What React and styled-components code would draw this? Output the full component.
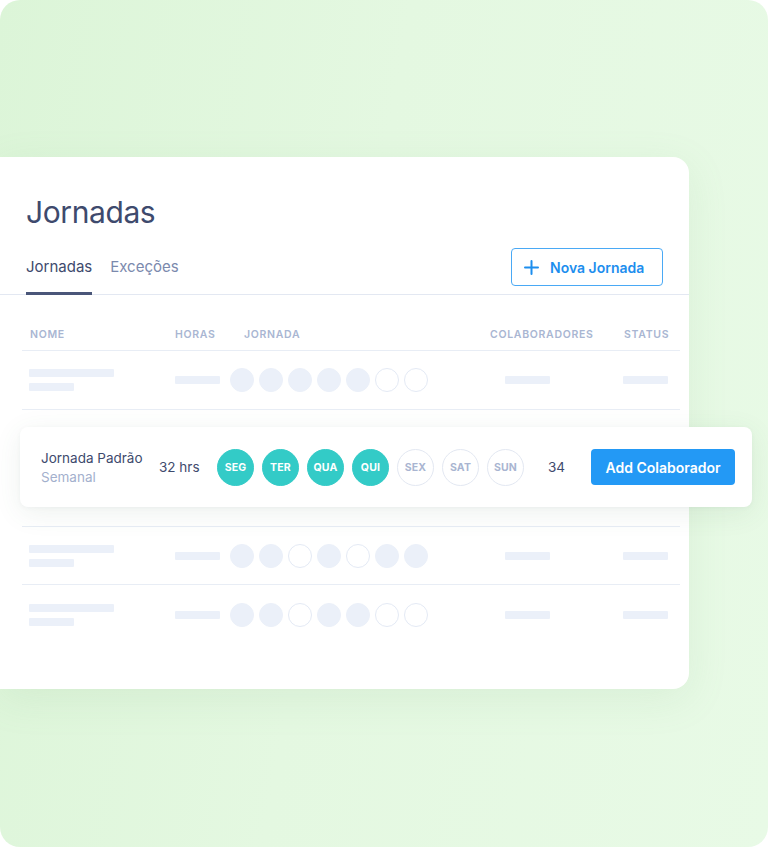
import React from 'react';
import styled, { createGlobalStyle } from 'styled-components';

const GlobalStyle = createGlobalStyle`
	* { box-sizing: border-box; }
	body {
		margin: 0;
		background: #ffffff;
		font-family: "Inter", "Lato", sans-serif;
		-webkit-font-smoothing: antialiased;
	}
`;

const Frame = styled.div`
	width: 768px;
	height: 847px;
	border-radius: 20px;
	overflow: hidden;
	padding-top: 157px;
	background: linear-gradient(100deg, #dcf5d8 0%, #e4f8e1 45%, #e8fae6 100%);
`;

const Card = styled.div`
	width: 689px;
	height: 532px;
	background: #ffffff;
	border-radius: 0 16px 16px 0;
	box-shadow: 0 10px 40px rgba(120, 170, 120, 0.12);
`;

const Head = styled.div`
	padding: 35px 26px 0 26px;
`;

const Title = styled.h1`
	margin: 0;
	font-size: 30px;
	line-height: 40px;
	font-weight: 400;
	letter-spacing: -0.4px;
	color: #3e4a6d;
`;

const TabBar = styled.div`
	margin-top: 16px;
	display: flex;
	justify-content: space-between;
	align-items: flex-start;
	padding: 0 26px;
	border-bottom: 1px solid #e3e8f2;
`;

const Tabs = styled.div`
	display: flex;
	gap: 18px;
`;

const Tab = styled.div`
	padding: 9px 0 15px;
	font-size: 15px;
	line-height: 20px;
	color: ${p => (p.$active ? '#3e4a6d' : '#7b89ad')};
	border-bottom: 3px solid ${p => (p.$active ? '#4a5679' : 'transparent')};
	margin-bottom: -1px;
`;

const OutlineButton = styled.button`
	display: flex;
	align-items: center;
	gap: 11px;
	height: 38px;
	width: 152px;
	padding: 0 12px;
	border: 1.5px solid #4aa9f5;
	border-radius: 4px;
	background: #ffffff;
	color: #1d8eee;
	font-family: inherit;
	font-size: 14px;
	font-weight: 600;
`;

const Table = styled.div`
	margin: 0 9px 0 22px;
`;

const HeaderRow = styled.div`
	display: grid;
	grid-template-columns: 145px 69px 246px 134px 1fr;
	align-items: end;
	height: 56px;
	padding: 0 0 8px 8px;
	border-bottom: 1px solid #e8edf5;
`;

const HeaderCell = styled.div`
	font-size: 10.5px;
	line-height: 14px;
	font-weight: 600;
	letter-spacing: 0.7px;
	color: #a9b6d2;
`;

const SkeletonRow = styled.div`
	display: grid;
	grid-template-columns: 146px 55px 275px 118px 1fr;
	align-items: center;
	height: ${p => p.$h || 59}px;
	padding-left: 7px;
	border-bottom: ${p => (p.$last ? 'none' : '1px solid #e8edf5')};
`;

const BarStack = styled.div`
	display: flex;
	flex-direction: column;
	gap: 6px;
`;

const Bar = styled.div`
	width: ${p => p.$w}px;
	height: 8px;
	border-radius: 1px;
	background: #ebf0f9;
`;

const Dots = styled.div`
	display: flex;
	gap: 5px;
`;

const Dot = styled.div`
	width: 24px;
	height: 24px;
	border-radius: 50%;
	background: ${p => (p.$on ? '#ebf0f9' : '#ffffff')};
	border: 1.5px solid ${p => (p.$on ? '#ebf0f9' : '#e4eaf5')};
`;

const FocusRow = styled.div`
	padding: 17px 0 19px;
	border-bottom: 1px solid #e8edf5;
`;

const FocusCard = styled.div`
	display: flex;
	align-items: center;
	height: 80px;
	margin: 0 -72px 0 -2px;
	padding: 0 17px 0 21px;
	background: #ffffff;
	border-radius: 8px;
	box-shadow: 0 6px 28px rgba(70, 110, 80, 0.09), 0 1px 4px rgba(70, 90, 120, 0.05);
`;

const NameBlock = styled.div`
	width: 118px;
	display: flex;
	flex-direction: column;
	gap: 1px;
	font-size: 13.5px;
	line-height: 18px;
`;

const Name = styled.span`
	color: #3e4a6d;
`;

const Sub = styled.span`
	color: #a3b0cd;
`;

const Hours = styled.div`
	width: 58px;
	font-size: 13.5px;
	color: #3e4a6d;
`;

const Days = styled.div`
	display: flex;
	gap: 8px;
`;

const Day = styled.div`
	width: 37px;
	height: 37px;
	border-radius: 50%;
	display: flex;
	align-items: center;
	justify-content: center;
	font-size: 10.5px;
	font-weight: 700;
	letter-spacing: 0.2px;
	color: ${p => (p.$on ? '#ffffff' : '#a9b5d1')};
	background: ${p => (p.$on ? '#33cbc7' : '#ffffff')};
	border: 1px solid ${p => (p.$on ? '#33cbc7' : '#e3e8f2')};
`;

const Count = styled.div`
	margin-left: 24px;
	width: 43px;
	font-size: 13.5px;
	color: #3e4a6d;
`;

const PrimaryButton = styled.button`
	width: 144px;
	height: 36px;
	border: none;
	border-radius: 4px;
	background: #2399f5;
	color: #ffffff;
	font-family: inherit;
	font-size: 14px;
	font-weight: 600;
`;

const PlusIcon = () => (
	<svg width="15" height="15" viewBox="0 0 15 15" fill="none">
		<path d="M7.5 1v13M1 7.5h13" stroke="#1d8eee" strokeWidth="2" strokeLinecap="round" />
	</svg>
);

const skeletons = [
	[1, 1, 1, 1, 1, 0, 0],
	[1, 1, 0, 1, 0, 1, 1],
	[1, 1, 0, 1, 1, 0, 0],
];

const days = [
	['SEG', true], ['TER', true], ['QUA', true], ['QUI', true],
	['SEX', false], ['SAT', false], ['SUN', false],
];

const Skeleton = ({ dots, last, h }) => (
	<SkeletonRow $last={last} $h={h}>
		<BarStack>
			<Bar $w={85} />
			<Bar $w={45} />
		</BarStack>
		<Bar $w={45} />
		<Dots>
			{dots.map((d, i) => <Dot key={i} $on={d === 1} />)}
		</Dots>
		<Bar $w={45} />
		<Bar $w={45} />
	</SkeletonRow>
);

const App = () => (
	<>
		<GlobalStyle />
		<Frame>
			<Card>
				<Head>
					<Title>Jornadas</Title>
				</Head>
				<TabBar>
					<Tabs>
						<Tab $active>Jornadas</Tab>
						<Tab>Exceções</Tab>
					</Tabs>
					<OutlineButton>
						<PlusIcon />
						Nova Jornada
					</OutlineButton>
				</TabBar>
				<Table>
					<HeaderRow>
						<HeaderCell>NOME</HeaderCell>
						<HeaderCell>HORAS</HeaderCell>
						<HeaderCell>JORNADA</HeaderCell>
						<HeaderCell>COLABORADORES</HeaderCell>
						<HeaderCell>STATUS</HeaderCell>
					</HeaderRow>
					<Skeleton dots={skeletons[0]} />
					<FocusRow>
						<FocusCard>
							<NameBlock>
								<Name>Jornada Padrão</Name>
								<Sub>Semanal</Sub>
							</NameBlock>
							<Hours>32 hrs</Hours>
							<Days>
								{days.map(([label, on]) => (
									<Day key={label} $on={on}>{label}</Day>
								))}
							</Days>
							<Count>34</Count>
							<PrimaryButton>Add Colaborador</PrimaryButton>
						</FocusCard>
					</FocusRow>
					<Skeleton dots={skeletons[1]} h={58} />
					<Skeleton dots={skeletons[2]} last />
				</Table>
			</Card>
		</Frame>
	</>
);

export default App;
